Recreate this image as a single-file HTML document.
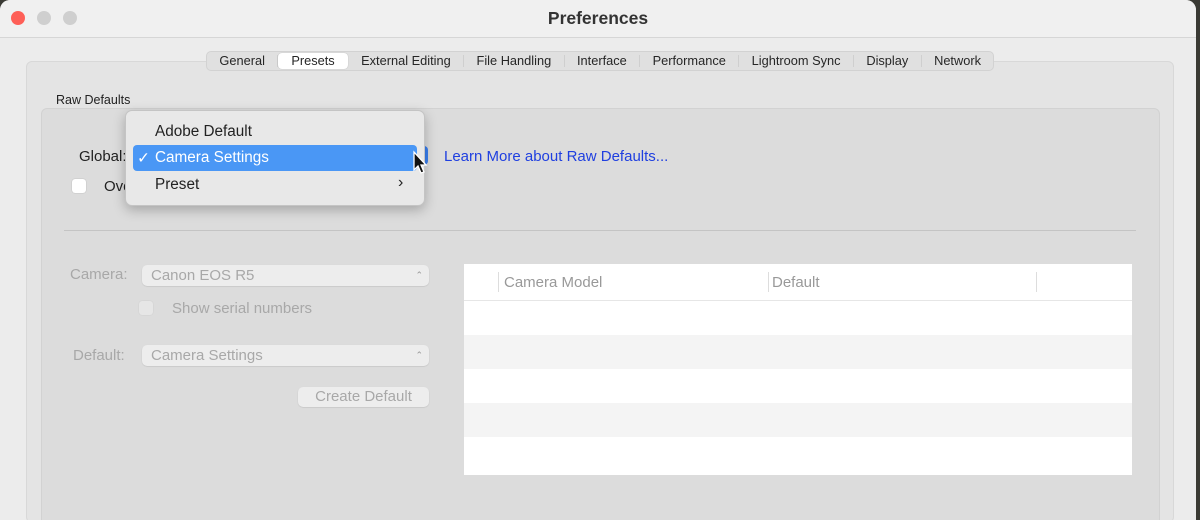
<!DOCTYPE html><html><head><style>
body{margin:0;width:1200px;height:506px;overflow:hidden;background:#3a3a34;font-family:"Liberation Sans",sans-serif;font-size:13px;color:#222}
.win{position:absolute;left:0;top:0;width:1196px;height:520px;background:#ececec;border-radius:10px 10px 0 0;overflow:hidden}
.tb{height:37px;border-bottom:1px solid #d6d6d6;background:#f0f0f0;position:relative}
.dot{position:absolute;top:11px;width:14px;height:14px;border-radius:50%;background:#cfcfcf}
.title{position:absolute;top:8px;left:0;right:0;text-align:center;font-weight:bold;font-size:17.5px;color:#333}
.outer{position:absolute;left:26px;top:61px;width:1146px;height:460px;background:#e4e4e4;border:1px solid #d8d8d8;border-radius:6px}
.tabs{position:absolute;left:206px;top:51px;height:18px;background:#e0e0e0;border:1px solid #d2d2d2;border-radius:5px;display:flex;align-items:center;font-size:12.8px;color:#262626}
.tabs span{padding:0 12.4px;border-right:1px solid #cfcfcf;line-height:12px}
.tabs span:last-child{border:none}
.tabs .on{background:#fff;border-radius:4px;line-height:16px;border:none;padding:0 13px;margin-right:1px;box-shadow:0 0 1px #aaa}
.inner{position:absolute;left:41px;top:108px;width:1117px;height:420px;background:#dcdcdc;border:1px solid #d2d2d2;border-radius:6px}
.abs{position:absolute}
.sel{position:absolute;background:#ededed;border-radius:5px;box-shadow:0 0.5px 1px #bbb;color:#a8a8a8;font-size:15px;padding-left:9px;box-sizing:border-box;line-height:21px}
.arr:after{content:"⌃";position:absolute;right:6px;top:0;font-size:9px;color:#999}
.menu{position:absolute;left:125px;top:110px;width:298px;height:94px;background:#e8e8e8;border:1px solid #c4c4c4;border-radius:7px;box-shadow:0 4px 12px rgba(0,0,0,.25);font-size:15.3px}
.mi{position:absolute;left:29px}
.hl{position:absolute;left:7px;top:34px;width:284px;height:26px;background:#4a97f5;border-radius:4px;color:#fff}
.tbl{position:absolute;left:464px;top:264px;width:668px;height:211px;background:#fff}
.row{position:absolute;left:0;width:668px;height:34px}
</style></head><body>
<div class="win">
<div class="tb"><div class="dot" style="left:11px;background:#fe5f57"></div><div class="dot" style="left:37px"></div><div class="dot" style="left:63px"></div><div class="title">Preferences</div></div>
<div class="outer"></div>
<div class="tabs"><span>General</span><span class="on">Presets</span><span>External Editing</span><span>File Handling</span><span>Interface</span><span>Performance</span><span>Lightroom Sync</span><span>Display</span><span>Network</span></div>
<div class="abs" style="left:56px;top:93px;font-size:12.5px">Raw Defaults</div>
<div class="inner"></div>
<div class="abs" style="left:79px;top:148px;font-size:15px">Global:</div>
<div class="abs" style="left:412px;top:146px;width:16px;height:19px;background:#3a7ff0;border-radius:4px"></div>
<div class="abs" style="left:444px;top:148px;font-size:15px;color:#1f3fe0">Learn More about Raw Defaults...</div>
<div class="abs" style="left:72px;top:179px;width:14px;height:14px;background:#fff;border-radius:3px;box-shadow:0 0 1px #999"></div>
<div class="abs" style="left:104px;top:178px;font-size:15px">Override global setting for specific camera</div>
<div class="abs" style="left:64px;top:230px;width:1072px;height:1px;background:#c4c4c4"></div>
<div class="abs" style="left:70px;top:266px;font-size:15px;color:#a8a8a8">Camera:</div>
<div class="sel arr" style="left:142px;top:265px;width:287px">Canon EOS R5</div>
<div class="abs" style="left:139px;top:301px;width:14px;height:14px;background:#e6e6e6;border-radius:3px;box-shadow:0 0 1px #bbb"></div>
<div class="abs" style="left:172px;top:300px;font-size:15px;color:#a8a8a8">Show serial numbers</div>
<div class="abs" style="left:73px;top:347px;font-size:15px;color:#a8a8a8">Default:</div>
<div class="sel arr" style="left:142px;top:345px;width:287px">Camera Settings</div>
<div class="sel" style="left:298px;top:387px;width:131px;text-align:center;padding:0;line-height:20px">Create Default</div>
<div class="tbl">
<div class="abs" style="left:34px;top:8px;width:1px;height:20px;background:#ddd"></div>
<div class="abs" style="left:40px;top:10px;font-size:15px;color:#999">Camera Model</div>
<div class="abs" style="left:304px;top:8px;width:1px;height:20px;background:#ddd"></div>
<div class="abs" style="left:308px;top:10px;font-size:15px;color:#999">Default</div>
<div class="abs" style="left:572px;top:8px;width:1px;height:20px;background:#ddd"></div>
<div class="row" style="top:36px;border-top:1px solid #e6e6e6"></div>
<div class="row" style="top:71px;background:#f4f4f4"></div>
<div class="row" style="top:139px;background:#f4f4f4"></div>
</div>
<div class="menu">
<div class="mi" style="top:12px">Adobe Default</div>
<div class="hl"><span class="abs" style="left:4px;top:4px">✓</span><span class="abs" style="left:22px;top:4px">Camera Settings</span></div>
<div class="mi" style="top:65px">Preset</div>
<div class="abs" style="left:272px;top:63px;font-size:16px">›</div>
</div>
<svg class="abs" style="left:412px;top:150px" width="16" height="26" viewBox="0 0 16 26"><path d="M2 2 L2 20 L6 16 L9 23 L12 22 L9 15 L14 15 Z" fill="#111" stroke="#fff" stroke-width="1.3"/></svg>
</div>
</body></html>
